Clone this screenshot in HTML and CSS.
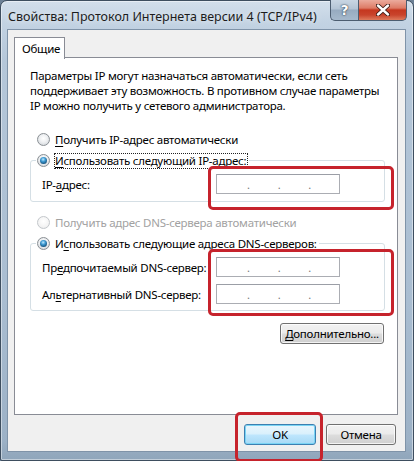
FILE: index.html
```html
<!DOCTYPE html>
<html lang="ru">
<head>
<meta charset="utf-8">
<title>Свойства: Протокол Интернета версии 4 (TCP/IPv4)</title>
<link rel="stylesheet" href="styles.css">
</head>
<body>
<div class="window">
  <div class="titlebar">
    <span class="title">Свойства: Протокол Интернета версии 4 (TCP/IPv4)</span>
    <div class="caption-btns">
      <div class="cap help">?</div>
      <div class="cap close">
        <svg width="14" height="12" viewBox="0 0 14 12"><path d="M2 1.5 L12 10.5 M12 1.5 L2 10.5" stroke="#3a1a14" stroke-width="4.2" stroke-linecap="round"/><path d="M2 1.5 L12 10.5 M12 1.5 L2 10.5" stroke="#fff" stroke-width="2.4" stroke-linecap="round"/></svg>
      </div>
    </div>
  </div>
  <div class="client">
    <div class="tabs"><div class="tab">Общие</div></div>
    <div class="panel">
      <p class="intro">Параметры IP могут назначаться автоматически, если сеть<br>поддерживает эту возможность. В противном случае параметры<br>IP можно получить у сетевого администратора.</p>

      <div class="radio-row"><span class="radio"></span><span class="rlabel"><u>П</u>олучить IP-адрес автоматически</span></div>
      <fieldset class="group g1">
        <legend><span class="radio checked"></span><span class="rlabel focus"><u>И</u>спользовать следующий IP-адрес:</span></legend>
        <div class="fields">
          <span class="flabel">IP-<u>а</u>дрес:</span>
          <div class="ipbox"><span>.</span><span>.</span><span>.</span></div>
          <div class="hl hl-1"></div>
        </div>
      </fieldset>

      <div class="radio-row dns-auto disabled"><span class="radio"></span><span class="rlabel">Получить адрес DNS-сервера автоматически</span></div>
      <fieldset class="group g2">
        <legend><span class="radio checked"></span><span class="rlabel">И<u>с</u>пользовать следующие адреса DNS-серверов:</span></legend>
        <div class="fields">
          <span class="flabel">Пр<u>е</u>дпочитаемый DNS-сервер:</span>
          <div class="ipbox"><span>.</span><span>.</span><span>.</span></div>
          <span class="flabel">Ал<u>ь</u>тернативный DNS-сервер:</span>
          <div class="ipbox"><span>.</span><span>.</span><span>.</span></div>
          <div class="hl hl-2"></div>
        </div>
      </fieldset>

      <div class="adv-row"><button class="btn adv"><u>Д</u>ополнительно...</button></div>
    </div>
    <div class="dialog-btns">
      <div class="ok-wrap"><button class="btn ok">OK</button><div class="hl hl-ok"></div></div>
      <button class="btn cancel">Отмена</button>
    </div>
  </div>
</div>
</body>
</html>
```

FILE: styles.css
```css
* { box-sizing: border-box; }
html, body { margin: 0; padding: 0; }
body {
  width: 414px;
  height: 461px;
  overflow: hidden;
  background: #6d8196;
  font-family: "Noto Sans", "Open Sans", sans-serif;
  font-size: 11.5px;
  letter-spacing: -0.25px;
  color: #000;
}
.window {
  width: 414px;
  height: 461px;
  border: 1px solid #3e4e5f;
  border-radius: 7px 7px 2px 2px;
  background: linear-gradient(180deg, #d3dfeb 0px, #c3d3e3 20px, #b5c7d9 60px, #a9bdd1 300px, #9cb1c6 440px, #8ea4b9 461px);
  padding: 0 7px 8px 6px;
  display: flex;
  flex-direction: column;
  box-shadow: inset 0 0 0 1px rgba(255,255,255,0.45);
}
.titlebar {
  height: 28px;
  display: flex;
  align-items: flex-start;
  justify-content: space-between;
}
.title {
  margin-top: 7px;
  margin-left: 1px;
  font-size: 12.5px;
  letter-spacing: 0;
  color: #1c1c1c;
  text-shadow: 0 0 6px rgba(255,255,255,0.9);
}
.caption-btns {
  display: flex;
  margin-top: -1px;
  margin-right: -1px;
}
.cap {
  height: 21px;
  border: 1px solid #4c5d70;
  border-top: none;
  display: flex;
  align-items: center;
  justify-content: center;
}
.help {
  width: 28px;
  border-right: none;
  border-radius: 0 0 0 5px;
  background: linear-gradient(180deg, #c9d6e3 0%, #b3c4d5 45%, #97abc0 50%, #a6b9cc 100%);
  color: #fff;
  font-family: "DejaVu Sans", sans-serif;
  font-weight: bold;
  font-size: 14px;
  letter-spacing: 0;
  text-shadow: 0 0 2px #2c3c4c, 0 0 1px #2c3c4c;
}
.close {
  width: 49px;
  border-radius: 0 0 5px 0;
  background: linear-gradient(180deg, #ebab9d 0%, #dd7b66 40%, #c5371f 50%, #c9442c 75%, #de7a5c 100%);
}
.client {
  flex: 1;
  background: #f0f0f0;
  border: 1px solid #7f93a8;
  padding: 7px 7px 6px 6px;
  display: flex;
  flex-direction: column;
}
.tabs {
  display: flex;
  height: 21px;
  position: relative;
  z-index: 1;
  margin-bottom: -1px;
}
.tab {
  width: 51px;
  height: 22px;
  background: #fff;
  border: 1px solid #898c95;
  border-bottom: none;
  padding: 3px 0 0 7px;
}
.panel {
  height: 358px;
  background: #fff;
  border: 1px solid #898c95;
  padding: 10px 12px 0 15px;
}
.intro {
  margin: 0;
  line-height: 15px;
  white-space: nowrap;
}
.radio-row {
  display: flex;
  align-items: center;
  height: 15px;
  margin-top: 19px;
  padding-left: 7px;
}
.radio {
  width: 13px;
  height: 13px;
  border-radius: 50%;
  border: 1px solid #8a8f94;
  background: radial-gradient(circle at 50% 40%, #ffffff 0%, #eef0f2 45%, #c9ced3 100%);
  position: relative;
  flex: none;
  margin-right: 5px;
}
.radio.checked::after {
  content: "";
  position: absolute;
  left: 2px;
  top: 2px;
  width: 7px;
  height: 7px;
  border-radius: 50%;
  background: radial-gradient(circle at 45% 35%, #bfe9ff 0%, #3f9bd3 35%, #17547f 75%, #0f3a5c 100%);
}
.rlabel u, .flabel u, .btn u { text-decoration-thickness: 1px; text-underline-offset: 2px; }
.disabled { color: #a2a2a2; }
.disabled .radio {
  border-color: #c3c7cb;
  background: radial-gradient(circle at 50% 40%, #fff 0%, #f4f4f4 60%, #e2e4e6 100%);
}
.group {
  margin: 6px 0 0 0;
  padding: 0;
  border: 1px solid #d5dfe5;
  border-radius: 3px;
  min-width: 0;
}
.group legend {
  display: flex;
  align-items: center;
  height: 15px;
  padding: 0 2px 0 0;
  margin-left: 5px;
}
.group legend .radio { margin-left: 1px; }
.focus {
  outline: 1px dotted #222;
  outline-offset: 0;
  padding: 0 1px 0 0;
  line-height: 14px;
}
.fields {
  position: relative;
  display: grid;
  grid-template-columns: 1fr 124px;
  align-items: center;
  row-gap: 7px;
  padding: 6px 44px 7px 11px;
}
.g2 .fields { padding-bottom: 6px; }
.flabel { line-height: 15px; }
.ipbox {
  height: 20px;
  border: 1px solid #abadb3;
  border-top-color: #9b9ea6;
  background: #fff;
  display: flex;
  padding-left: 30px;
  color: #777;
  font-size: 11px;
  line-height: 19px;
}
.ipbox span { width: 31px; }
.hl {
  position: absolute;
  border: 3px solid #c6232c;
  border-radius: 5px;
  pointer-events: none;
}
.hl-1 {
  grid-column: 2;
  grid-row: 1;
  top: -8px; bottom: -9px; left: -8px; right: -10px;
}
.hl-2 {
  grid-column: 2;
  grid-row: 1 / 3;
  top: -8px; bottom: -12px; left: -8px; right: -10px;
}
.dns-auto { margin-top: 13px; }
.g2 { margin-top: 6px; }
.adv-row {
  display: flex;
  justify-content: flex-end;
  margin-top: 12px;
  padding-right: 1px;
}
.btn {
  font-family: inherit;
  font-size: 11.5px;
  letter-spacing: -0.25px;
  color: #000;
  height: 21px;
  border: 1px solid #707070;
  border-radius: 3px;
  background: linear-gradient(180deg, #f2f2f2 0%, #ebebeb 48%, #dddddd 52%, #cfcfcf 100%);
  box-shadow: inset 0 0 0 1px rgba(255,255,255,0.75);
  padding: 0;
  cursor: default;
}
.adv { width: 104px; }
.dialog-btns {
  display: flex;
  justify-content: flex-end;
  align-items: flex-start;
  gap: 10px;
  margin-top: 9px;
  padding-right: 2px;
}
.ok-wrap { position: relative; }
.ok {
  width: 72px;
  border-color: #3c7fb1;
  background: linear-gradient(180deg, #eaf6fd 0%, #d9f0fc 48%, #bee6fd 52%, #a7d9f5 100%);
  box-shadow: inset 0 0 0 1px #7ad4f4;
  display: block;
}
.cancel { width: 70px; }
.hl-ok {
  top: -12px; bottom: -17px; left: -9px; right: -7px;
}
```
